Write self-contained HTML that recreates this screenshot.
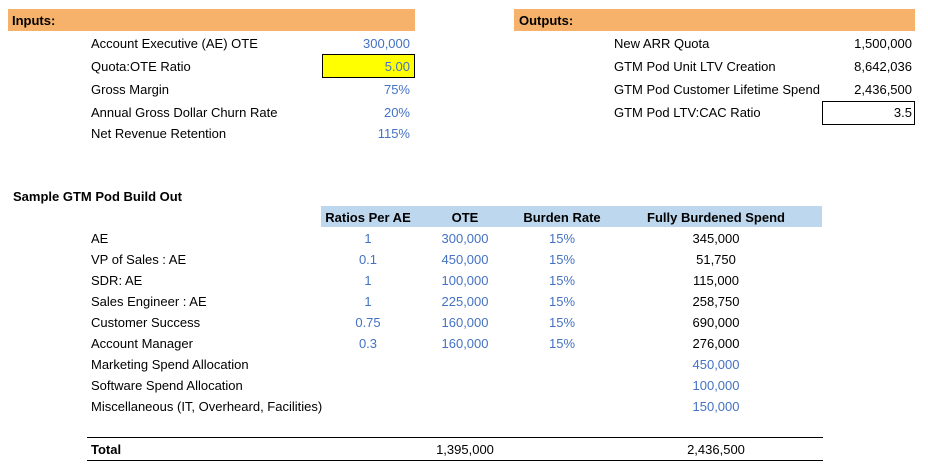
<!DOCTYPE html>
<html><head><meta charset="utf-8"><style>
body{margin:0;width:928px;height:469px;background:#fff;position:relative;overflow:hidden;font-family:"Liberation Sans",Arial,sans-serif;font-size:13px;color:#000}
div{position:absolute;white-space:nowrap;line-height:16px;margin-top:1px}
.b{font-weight:bold}
.bl{color:#4472c4}
.r{text-align:right}
.c{text-align:center}
.bar{background:#f6b26b;height:22px;margin-top:0}
</style></head><body>
<div class="bar" style="left:8px;top:9px;width:407px"></div>
<div class="bar" style="left:514px;top:9px;width:401px"></div>
<div class="b" style="left:12px;top:12px">Inputs:</div>
<div class="b" style="left:519px;top:12px">Outputs:</div>

<div style="left:91px;top:35px">Account Executive (AE) OTE</div>
<div style="left:91px;top:58px">Quota:OTE Ratio</div>
<div style="left:91px;top:81px">Gross Margin</div>
<div style="left:91px;top:104px">Annual Gross Dollar Churn Rate</div>
<div style="left:91px;top:125px">Net Revenue Retention</div>
<div style="left:322px;top:53px;width:91px;height:22px;background:#ffff00;border:1px solid #000"></div>
<div class="bl r" style="left:300px;width:110px;top:35px">300,000</div>
<div class="bl r" style="left:300px;width:110px;top:58px">5.00</div>
<div class="bl r" style="left:300px;width:110px;top:81px">75%</div>
<div class="bl r" style="left:300px;width:110px;top:104px">20%</div>
<div class="bl r" style="left:300px;width:110px;top:125px">115%</div>

<div style="left:614px;top:35px">New ARR Quota</div>
<div style="left:614px;top:58px">GTM Pod Unit LTV Creation</div>
<div style="left:614px;top:81px">GTM Pod Customer Lifetime Spend</div>
<div style="left:614px;top:104px">GTM Pod LTV:CAC Ratio</div>
<div style="left:822px;top:100px;width:91px;height:22px;border:1px solid #000"></div>
<div class="r" style="left:800px;width:112px;top:35px">1,500,000</div>
<div class="r" style="left:800px;width:112px;top:58px">8,642,036</div>
<div class="r" style="left:800px;width:112px;top:81px">2,436,500</div>
<div class="r" style="left:800px;width:112px;top:104px">3.5</div>

<div class="b" style="left:13px;top:188px">Sample GTM Pod Build Out</div>
<div style="left:321px;top:206px;width:501px;height:21px;background:#bdd7ee;margin-top:0"></div>
<div class="b c" style="left:318px;width:100px;top:209px">Ratios Per AE</div>
<div class="b c" style="left:415px;width:100px;top:209px">OTE</div>
<div class="b c" style="left:512px;width:100px;top:209px">Burden Rate</div>
<div class="b c" style="left:626px;width:180px;top:209px">Fully Burdened Spend</div>

<div style="left:91px;top:230px">AE</div>
<div style="left:91px;top:251px">VP of Sales : AE</div>
<div style="left:91px;top:272px">SDR: AE</div>
<div style="left:91px;top:293px">Sales Engineer : AE</div>
<div style="left:91px;top:314px">Customer Success</div>
<div style="left:91px;top:335px">Account Manager</div>
<div style="left:91px;top:356px">Marketing Spend Allocation</div>
<div style="left:91px;top:377px">Software Spend Allocation</div>
<div style="left:91px;top:398px">Miscellaneous (IT, Overheard, Facilities)</div>

<div class="bl c" style="left:318px;width:100px;top:230px">1</div>
<div class="bl c" style="left:318px;width:100px;top:251px">0.1</div>
<div class="bl c" style="left:318px;width:100px;top:272px">1</div>
<div class="bl c" style="left:318px;width:100px;top:293px">1</div>
<div class="bl c" style="left:318px;width:100px;top:314px">0.75</div>
<div class="bl c" style="left:318px;width:100px;top:335px">0.3</div>

<div class="bl c" style="left:415px;width:100px;top:230px">300,000</div>
<div class="bl c" style="left:415px;width:100px;top:251px">450,000</div>
<div class="bl c" style="left:415px;width:100px;top:272px">100,000</div>
<div class="bl c" style="left:415px;width:100px;top:293px">225,000</div>
<div class="bl c" style="left:415px;width:100px;top:314px">160,000</div>
<div class="bl c" style="left:415px;width:100px;top:335px">160,000</div>

<div class="bl c" style="left:512px;width:100px;top:230px">15%</div>
<div class="bl c" style="left:512px;width:100px;top:251px">15%</div>
<div class="bl c" style="left:512px;width:100px;top:272px">15%</div>
<div class="bl c" style="left:512px;width:100px;top:293px">15%</div>
<div class="bl c" style="left:512px;width:100px;top:314px">15%</div>
<div class="bl c" style="left:512px;width:100px;top:335px">15%</div>

<div class="c" style="left:626px;width:180px;top:230px">345,000</div>
<div class="c" style="left:626px;width:180px;top:251px">51,750</div>
<div class="c" style="left:626px;width:180px;top:272px">115,000</div>
<div class="c" style="left:626px;width:180px;top:293px">258,750</div>
<div class="c" style="left:626px;width:180px;top:314px">690,000</div>
<div class="c" style="left:626px;width:180px;top:335px">276,000</div>
<div class="bl c" style="left:626px;width:180px;top:356px">450,000</div>
<div class="bl c" style="left:626px;width:180px;top:377px">100,000</div>
<div class="bl c" style="left:626px;width:180px;top:398px">150,000</div>

<div style="left:87px;top:436px;width:736px;height:0;border-top:1px solid #000"></div>
<div style="left:87px;top:459px;width:736px;height:0;border-top:1px solid #000"></div>
<div class="b" style="left:91px;top:441px">Total</div>
<div class="c" style="left:415px;width:100px;top:441px">1,395,000</div>
<div class="c" style="left:626px;width:180px;top:441px">2,436,500</div>
</body></html>
